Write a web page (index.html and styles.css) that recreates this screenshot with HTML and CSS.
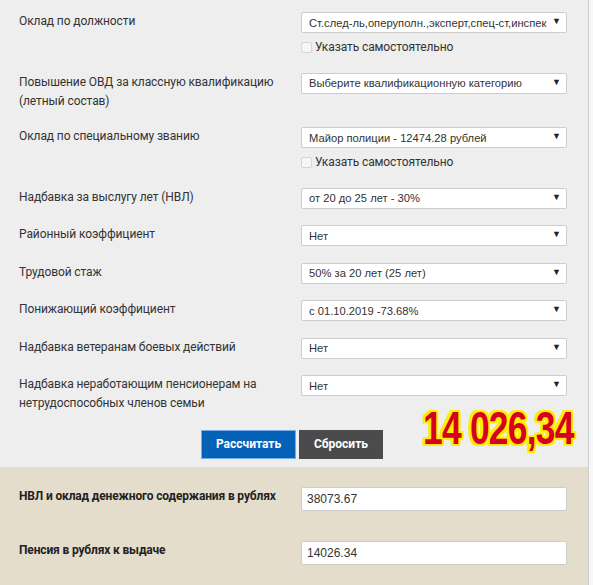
FILE: index.html
```html
<!DOCTYPE html>
<html lang="ru">
<head>
  <meta charset="UTF-8" />
  <meta name="viewport" content="width=device-width, initial-scale=1.0"/>
  <title>Калькулятор пенсии</title>
  <link rel="stylesheet" href="styles.css">
</head>
<body>
  <div class="calc">
    <form class="calc-form">
      <div class="row">
        <div class="row-label">Оклад по должности</div>
        <div class="row-field">
          <div class="select"><select><option>Ст.след-ль,оперуполн.,эксперт,спец-ст,инспек</option></select></div>
          <label class="own"><input type="checkbox"> Указать самостоятельно</label>
        </div>
      </div>
      <div class="row">
        <div class="row-label">Повышение ОВД за классную квалификацию (летный состав)</div>
        <div class="row-field">
          <div class="select"><select><option>Выберите квалификационную категорию</option></select></div>
        </div>
      </div>
      <div class="row">
        <div class="row-label">Оклад по специальному званию</div>
        <div class="row-field">
          <div class="select"><select><option>Майор полиции - 12474.28 рублей</option></select></div>
          <label class="own"><input type="checkbox"> Указать самостоятельно</label>
        </div>
      </div>
      <div class="row">
        <div class="row-label">Надбавка за выслугу лет (НВЛ)</div>
        <div class="row-field">
          <div class="select"><select><option>от 20 до 25 лет - 30%</option></select></div>
        </div>
      </div>
      <div class="row">
        <div class="row-label">Районный коэффициент</div>
        <div class="row-field">
          <div class="select"><select><option>Нет</option></select></div>
        </div>
      </div>
      <div class="row">
        <div class="row-label">Трудовой стаж</div>
        <div class="row-field">
          <div class="select"><select><option>50% за 20 лет (25 лет)</option></select></div>
        </div>
      </div>
      <div class="row">
        <div class="row-label">Понижающий коэффициент</div>
        <div class="row-field">
          <div class="select"><select><option>с 01.10.2019 -73.68%</option></select></div>
        </div>
      </div>
      <div class="row">
        <div class="row-label">Надбавка ветеранам боевых действий</div>
        <div class="row-field">
          <div class="select"><select><option>Нет</option></select></div>
        </div>
      </div>
      <div class="row">
        <div class="row-label">Надбавка неработающим пенсионерам на нетрудоспособных членов семьи</div>
        <div class="row-field">
          <div class="select"><select><option>Нет</option></select></div>
        </div>
      </div>
      <div class="actions">
        <button type="button" class="btn btn-calc">Рассчитать</button>
        <button type="reset" class="btn btn-reset">Сбросить</button>
        <div class="total">14 026,34</div>
      </div>
    </form>
    <div class="result">
      <div class="result-row">
        <div class="result-label">НВЛ и оклад денежного содержания в рублях</div>
        <input type="text" class="result-input" value="38073.67" readonly>
      </div>
      <div class="result-row">
        <div class="result-label">Пенсия в рублях к выдаче</div>
        <input type="text" class="result-input" value="14026.34" readonly>
      </div>
    </div>
  </div>
</body>
</html>
```

FILE: styles.css
```css
body {
  margin: 0;
  background: #f7f7f7;
  font-family: Roboto, 'Noto Sans', sans-serif;
  color: #333;
}

.calc {
  width: 588px;
  border-right: 1px solid #cfcfcf;
  border-bottom: 1px solid #cfcfcf;
  background: #eee;
}

.calc-form {
  padding-top: 12px;
  padding-bottom: 8px;
}

.row {
  display: flex;
  align-items: flex-start;
  padding-left: 19px;
  margin-bottom: 16.5px;
}

.row-label {
  width: 282px;
  font-size: 12px;
  letter-spacing: -0.1px;
  line-height: 19px;
}

.row-field {
  width: 266px;
}

/* Селект со своей стрелкой */
.select {
  position: relative;
}

.select select {
  appearance: none;
  -webkit-appearance: none;
  display: block;
  width: 100%;
  height: 21px;
  margin: 0;
  padding: 0 13px 0 7px;
  border: 1px solid #cdcdcd;
  border-radius: 2px;
  background: #fff;
  color: #333;
  font-family: 'Liberation Sans', Arial, sans-serif;
  font-size: 11.2px;
}

.select::after {
  content: '▼';
  position: absolute;
  right: 6px;
  top: 4px;
  padding-left: 3px;
  background: #fff;
  font-size: 9px;
  color: #222;
  pointer-events: none;
}

.own {
  display: flex;
  align-items: center;
  margin-top: 5px;
  font-size: 12px;
  letter-spacing: -0.1px;
  line-height: 18px;
  color: #333;
}

.own input {
  appearance: none;
  -webkit-appearance: none;
  width: 11px;
  height: 11px;
  margin: 0 3px 0 0;
  border: 1px solid #d6d6d6;
  border-radius: 2px;
  background: #f6f6f6;
}

.actions {
  position: relative;
  display: flex;
  justify-content: center;
  gap: 3px;
  padding-right: 4px;
  margin-top: 15px;
}

.btn {
  height: 29px;
  padding: 0 10px;
  border: 1px solid transparent;
  font-family: Roboto, sans-serif;
  font-size: 12px;
  font-weight: bold;
  color: #fff;
  cursor: pointer;
}

.btn-calc {
  width: 95px;
  background: #0561b6;
  border-color: #74aeea;
}

.btn-reset {
  width: 84px;
  background: #4b4b4b;
  border-color: #4b4b4b;
}

/* Крупная сумма поверх правого угла */
.total {
  position: absolute;
  right: 14px;
  top: -25px;
  font-family: 'Liberation Sans', sans-serif;
  font-weight: bold;
  font-size: 46px;
  letter-spacing: -1px;
  line-height: 46px;
  color: #d6001f;
  transform: scaleX(0.77);
  transform-origin: right center;
  text-shadow:
    3px 0 0 #ffee00, -3px 0 0 #ffee00, 0 2px 0 #ffee00, 0 -2px 0 #ffee00,
    3px 2px 0 #ffee00, -3px -2px 0 #ffee00, 3px -2px 0 #ffee00, -3px 2px 0 #ffee00;
}

.result {
  background: #e4ddcc;
  padding: 20px 0 20px 19px;
}

.result-row {
  display: flex;
  align-items: flex-start;
  margin-bottom: 30px;
}

.result-row:last-child {
  margin-bottom: 0;
}

.result-label {
  width: 282px;
  font-size: 12px;
  letter-spacing: -0.15px;
  line-height: 19px;
  font-weight: bold;
  color: #222;
  white-space: nowrap;
}

.result-input {
  box-sizing: border-box;
  width: 266px;
  height: 24px;
  margin: 0;
  padding: 0 5px;
  border: 1px solid #cdcdcd;
  border-radius: 2px;
  background: #fff;
  font-family: 'Liberation Sans', Arial, sans-serif;
  font-size: 12px;
  color: #333;
}
```
